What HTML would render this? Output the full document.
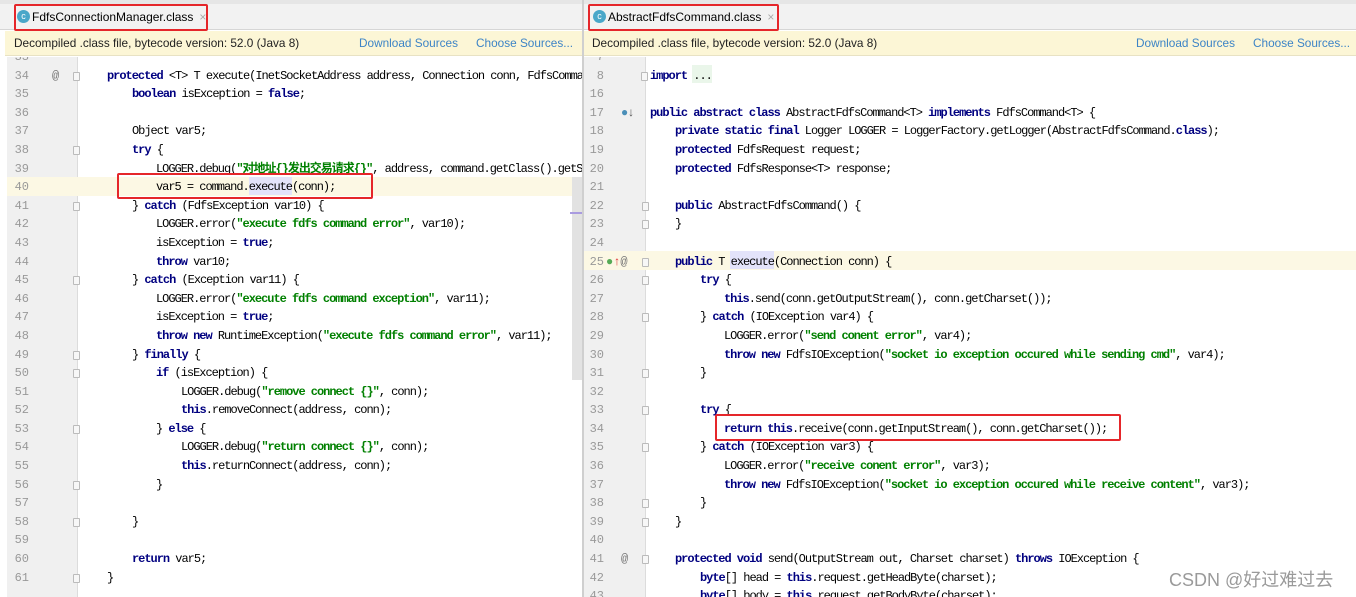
<!DOCTYPE html>
<html><head><meta charset="utf-8"><style>
*{margin:0;padding:0;box-sizing:border-box}
body{width:1356px;height:597px;overflow:hidden;background:#fff;position:relative;font-family:"Liberation Sans","Noto Sans CJK SC",sans-serif}
.abs{position:absolute}
.tabbar{top:0;height:30px;background:#f2f2f2;border-bottom:1px solid #d6d6d6;border-top:4px solid #e6e6e6}
.tab{top:6px;height:22px;font-size:12px;color:#000;line-height:22px;padding-left:16px;white-space:nowrap}
.ci{position:absolute;left:1px;top:4px;width:13px;height:13px;border-radius:50%;background:#4aa7c9;color:#fff;font-size:9px;line-height:13px;text-align:center}
.x{color:#aaa;margin-left:6px}
.banner{top:31px;height:25px;background:#fcf6d6;border-bottom:1px solid #e8e2c4;font-size:11.8px;line-height:24px;color:#222;white-space:nowrap}
.lnk{color:#3d84c6}
.gut{top:57px;bottom:0;background:#f0f0f0;border-right:1px solid #dcdcdc}
.code{top:48px;font-family:"Liberation Mono","Noto Sans CJK SC",monospace;font-size:12px;letter-spacing:-1.02px;color:#000}
.ln{height:18.6px;line-height:18.6px;position:relative;white-space:nowrap}
.ln>span{white-space:pre}
.n{position:absolute;color:#999;width:24px;text-align:right;letter-spacing:0}
.k{color:#000080;font-weight:bold}
.s{color:#008000;font-weight:bold}
.f{position:absolute;width:7px;height:9px;border:1px solid #bbb;border-radius:1px;background:#f7f7f7;top:5px}
.red{border:2px solid #e5262a;border-radius:2px}
.hl{background:#fcf8e4}
</style></head><body>
<div class="abs tabbar" style="left:0;width:1356px"></div>
<div class="abs" style="left:582px;top:0;width:2px;height:597px;background:#cfcfcf"></div>
<div class="abs tab" style="left:16px"><span class="ci">c</span>FdfsConnectionManager.class<span class="x">×</span></div>
<div class="abs tab" style="left:592px"><span class="ci">c</span>AbstractFdfsCommand.class<span class="x">×</span></div>
<div class="abs red" style="left:14px;top:4px;width:194px;height:27px"></div>
<div class="abs red" style="left:588px;top:4px;width:191px;height:27px"></div>
<div class="abs banner" style="left:5px;width:577px;padding-left:9px">Decompiled .class file, bytecode version: 52.0 (Java 8)<span class="lnk abs" style="left:354px">Download Sources</span><span class="lnk abs" style="left:471px">Choose Sources...</span></div>
<div class="abs banner" style="left:584px;width:772px;padding-left:8px">Decompiled .class file, bytecode version: 52.0 (Java 8)<span class="lnk abs" style="left:552px">Download Sources</span><span class="lnk abs" style="left:669px">Choose Sources...</span></div>
<div class="abs gut" style="left:7px;width:71px"></div>
<div class="abs gut" style="left:584px;width:62px"></div>
<div class="abs" style="left:0;top:57px;width:5px;height:540px;background:#fff"></div>
<div class="abs hl" style="left:7px;top:177px;width:565px;height:19px"></div>
<div class="abs hl" style="left:584px;top:251px;width:772px;height:19px"></div>
<div class="abs" style="left:572px;top:177px;width:10px;height:203px;background:#e2e2e2"></div>
<div class="abs" style="left:570px;top:212px;width:12px;height:2px;background:#a99be0"></div>
<div class="abs" style="left:249px;top:177px;width:43px;height:18px;background:#e3e3fa"></div>
<div class="abs" style="left:730px;top:251px;width:44px;height:18px;background:#e3e3fa"></div>
<div class="abs" style="left:692px;top:65px;width:20px;height:18px;background:#eaf6ea"></div>

<div class="abs code" style="left:0;width:582px;height:549px;overflow:hidden;clip-path:inset(9px 0 0 0)"><div class="ln"><span class="n" style="left:5px">33</span></div><div class="ln"><span class="n" style="left:5px">34</span><span class="abs" style="left:52px;color:#777">@</span><span class="f" style="left:73px"></span><span class="abs" style="left:107px"><span class="k">protected</span> &lt;T&gt; T execute(InetSocketAddress address, Connection conn, FdfsCommand&lt;T&gt; command) {</span></div><div class="ln"><span class="n" style="left:5px">35</span><span class="abs" style="left:132px"><span class="k">boolean</span> isException = <span class="k">false</span>;</span></div><div class="ln"><span class="n" style="left:5px">36</span></div><div class="ln"><span class="n" style="left:5px">37</span><span class="abs" style="left:132px">Object var5;</span></div><div class="ln"><span class="n" style="left:5px">38</span><span class="f" style="left:73px"></span><span class="abs" style="left:132px"><span class="k">try</span> {</span></div><div class="ln"><span class="n" style="left:5px">39</span><span class="abs" style="left:156px">LOGGER.debug(<span class="s">"对地址{}发出交易请求{}"</span>, address, command.getClass().getSimpleName());</span></div><div class="ln"><span class="n" style="left:5px">40</span><span class="abs" style="left:156px">var5 = command.execute(conn);</span></div><div class="ln"><span class="n" style="left:5px">41</span><span class="f" style="left:73px"></span><span class="abs" style="left:132px">} <span class="k">catch</span> (FdfsException var10) {</span></div><div class="ln"><span class="n" style="left:5px">42</span><span class="abs" style="left:156px">LOGGER.error(<span class="s">"execute fdfs command error"</span>, var10);</span></div><div class="ln"><span class="n" style="left:5px">43</span><span class="abs" style="left:156px">isException = <span class="k">true</span>;</span></div><div class="ln"><span class="n" style="left:5px">44</span><span class="abs" style="left:156px"><span class="k">throw</span> var10;</span></div><div class="ln"><span class="n" style="left:5px">45</span><span class="f" style="left:73px"></span><span class="abs" style="left:132px">} <span class="k">catch</span> (Exception var11) {</span></div><div class="ln"><span class="n" style="left:5px">46</span><span class="abs" style="left:156px">LOGGER.error(<span class="s">"execute fdfs command exception"</span>, var11);</span></div><div class="ln"><span class="n" style="left:5px">47</span><span class="abs" style="left:156px">isException = <span class="k">true</span>;</span></div><div class="ln"><span class="n" style="left:5px">48</span><span class="abs" style="left:156px"><span class="k">throw new</span> RuntimeException(<span class="s">"execute fdfs command error"</span>, var11);</span></div><div class="ln"><span class="n" style="left:5px">49</span><span class="f" style="left:73px"></span><span class="abs" style="left:132px">} <span class="k">finally</span> {</span></div><div class="ln"><span class="n" style="left:5px">50</span><span class="f" style="left:73px"></span><span class="abs" style="left:156px"><span class="k">if</span> (isException) {</span></div><div class="ln"><span class="n" style="left:5px">51</span><span class="abs" style="left:181px">LOGGER.debug(<span class="s">"remove connect {}"</span>, conn);</span></div><div class="ln"><span class="n" style="left:5px">52</span><span class="abs" style="left:181px"><span class="k">this</span>.removeConnect(address, conn);</span></div><div class="ln"><span class="n" style="left:5px">53</span><span class="f" style="left:73px"></span><span class="abs" style="left:156px">} <span class="k">else</span> {</span></div><div class="ln"><span class="n" style="left:5px">54</span><span class="abs" style="left:181px">LOGGER.debug(<span class="s">"return connect {}"</span>, conn);</span></div><div class="ln"><span class="n" style="left:5px">55</span><span class="abs" style="left:181px"><span class="k">this</span>.returnConnect(address, conn);</span></div><div class="ln"><span class="n" style="left:5px">56</span><span class="f" style="left:73px"></span><span class="abs" style="left:156px">}</span></div><div class="ln"><span class="n" style="left:5px">57</span></div><div class="ln"><span class="n" style="left:5px">58</span><span class="f" style="left:73px"></span><span class="abs" style="left:132px">}</span></div><div class="ln"><span class="n" style="left:5px">59</span></div><div class="ln"><span class="n" style="left:5px">60</span><span class="abs" style="left:132px"><span class="k">return</span> var5;</span></div><div class="ln"><span class="n" style="left:5px">61</span><span class="f" style="left:73px"></span><span class="abs" style="left:107px">}</span></div></div>

<div class="abs code" style="left:584px;width:772px;height:549px;overflow:hidden;clip-path:inset(9px 0 0 0)"><div class="ln"><span class="n" style="left:-4px">7</span></div><div class="ln"><span class="n" style="left:-4px">8</span><span class="f" style="left:57px"></span><span class="abs" style="left:66px"><span class="k">import</span> ...</span></div><div class="ln"><span class="n" style="left:-4px">16</span></div><div class="ln"><span class="n" style="left:-4px">17</span><span class="abs" style="left:37px;color:#4a8fb8">●<span style="color:#555">↓</span></span><span class="abs" style="left:66px"><span class="k">public abstract class</span> AbstractFdfsCommand&lt;T&gt; <span class="k">implements</span> FdfsCommand&lt;T&gt; {</span></div><div class="ln"><span class="n" style="left:-4px">18</span><span class="abs" style="left:91px"><span class="k">private static final</span> Logger LOGGER = LoggerFactory.getLogger(AbstractFdfsCommand.<span class="k">class</span>);</span></div><div class="ln"><span class="n" style="left:-4px">19</span><span class="abs" style="left:91px"><span class="k">protected</span> FdfsRequest request;</span></div><div class="ln"><span class="n" style="left:-4px">20</span><span class="abs" style="left:91px"><span class="k">protected</span> FdfsResponse&lt;T&gt; response;</span></div><div class="ln"><span class="n" style="left:-4px">21</span></div><div class="ln"><span class="n" style="left:-4px">22</span><span class="f" style="left:58px"></span><span class="abs" style="left:91px"><span class="k">public</span> AbstractFdfsCommand() {</span></div><div class="ln"><span class="n" style="left:-4px">23</span><span class="f" style="left:58px"></span><span class="abs" style="left:91px">}</span></div><div class="ln"><span class="n" style="left:-4px">24</span></div><div class="ln"><span class="n" style="left:-4px">25</span><span class="abs" style="left:22px;color:#5a5;letter-spacing:0">●<span style="color:#d33">↑</span><span style="color:#777">@</span></span><span class="f" style="left:58px"></span><span class="abs" style="left:91px"><span class="k">public</span> T execute(Connection conn) {</span></div><div class="ln"><span class="n" style="left:-4px">26</span><span class="f" style="left:58px"></span><span class="abs" style="left:116px"><span class="k">try</span> {</span></div><div class="ln"><span class="n" style="left:-4px">27</span><span class="abs" style="left:140px"><span class="k">this</span>.send(conn.getOutputStream(), conn.getCharset());</span></div><div class="ln"><span class="n" style="left:-4px">28</span><span class="f" style="left:58px"></span><span class="abs" style="left:116px">} <span class="k">catch</span> (IOException var4) {</span></div><div class="ln"><span class="n" style="left:-4px">29</span><span class="abs" style="left:140px">LOGGER.error(<span class="s">"send conent error"</span>, var4);</span></div><div class="ln"><span class="n" style="left:-4px">30</span><span class="abs" style="left:140px"><span class="k">throw new</span> FdfsIOException(<span class="s">"socket io exception occured while sending cmd"</span>, var4);</span></div><div class="ln"><span class="n" style="left:-4px">31</span><span class="f" style="left:58px"></span><span class="abs" style="left:116px">}</span></div><div class="ln"><span class="n" style="left:-4px">32</span></div><div class="ln"><span class="n" style="left:-4px">33</span><span class="f" style="left:58px"></span><span class="abs" style="left:116px"><span class="k">try</span> {</span></div><div class="ln"><span class="n" style="left:-4px">34</span><span class="abs" style="left:140px"><span class="k">return this</span>.receive(conn.getInputStream(), conn.getCharset());</span></div><div class="ln"><span class="n" style="left:-4px">35</span><span class="f" style="left:58px"></span><span class="abs" style="left:116px">} <span class="k">catch</span> (IOException var3) {</span></div><div class="ln"><span class="n" style="left:-4px">36</span><span class="abs" style="left:140px">LOGGER.error(<span class="s">"receive conent error"</span>, var3);</span></div><div class="ln"><span class="n" style="left:-4px">37</span><span class="abs" style="left:140px"><span class="k">throw new</span> FdfsIOException(<span class="s">"socket io exception occured while receive content"</span>, var3);</span></div><div class="ln"><span class="n" style="left:-4px">38</span><span class="f" style="left:58px"></span><span class="abs" style="left:116px">}</span></div><div class="ln"><span class="n" style="left:-4px">39</span><span class="f" style="left:58px"></span><span class="abs" style="left:91px">}</span></div><div class="ln"><span class="n" style="left:-4px">40</span></div><div class="ln"><span class="n" style="left:-4px">41</span><span class="abs" style="left:37px;color:#777">@</span><span class="f" style="left:58px"></span><span class="abs" style="left:91px"><span class="k">protected void</span> send(OutputStream out, Charset charset) <span class="k">throws</span> IOException {</span></div><div class="ln"><span class="n" style="left:-4px">42</span><span class="abs" style="left:116px"><span class="k">byte</span>[] head = <span class="k">this</span>.request.getHeadByte(charset);</span></div><div class="ln"><span class="n" style="left:-4px">43</span><span class="abs" style="left:116px"><span class="k">byte</span>[] body = <span class="k">this</span>.request.getBodyByte(charset);</span></div></div>

<div class="abs red" style="left:117px;top:173px;width:256px;height:26px"></div>
<div class="abs red" style="left:715px;top:414px;width:406px;height:27px"></div>
<div class="abs" style="left:1169px;top:566px;font-size:18px;color:#9a9a9a;white-space:nowrap">CSDN @好过难过去</div>
</body></html>
